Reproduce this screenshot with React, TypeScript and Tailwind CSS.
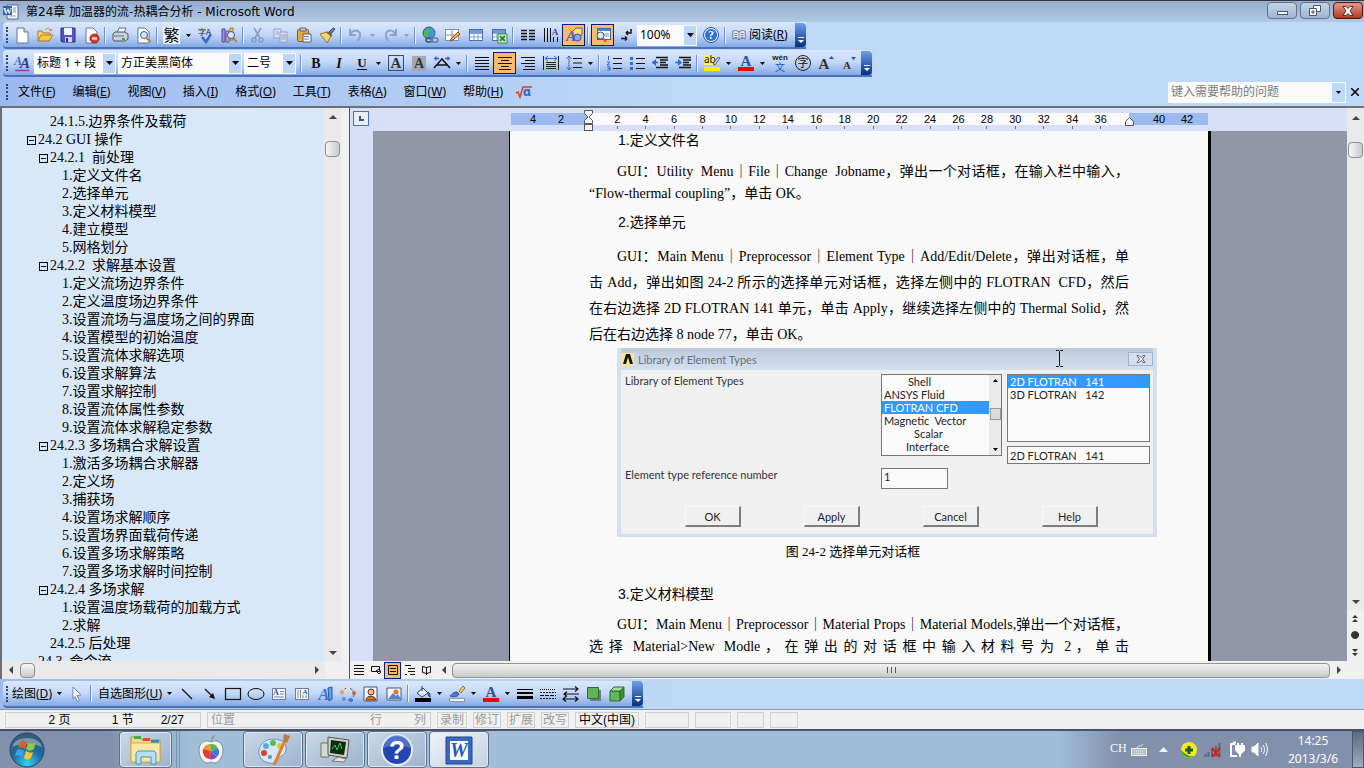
import { ReactNode } from "react";

const UI = "font-['Noto_Sans','Noto_Sans_CJK_SC',sans-serif]";
const SERIF = "font-['Liberation_Serif','Noto_Sans_CJK_SC',serif]";

const Svg = ({ children, size = 18 }: { children: ReactNode; size?: number }) => (
  <svg width={size} height={size} viewBox="0 0 18 18" fill="none" aria-hidden="true" className="shrink-0 overflow-visible">
    {children}
  </svg>
);

const Letter = ({ t, x = 9, y = 14, s = 14, fill = "#111", w = "bold", st = "normal" }: {
  t: string; x?: number; y?: number; s?: number; fill?: string; w?: string; st?: string;
}) => (
  <text x={x} y={y} fontSize={s} fill={fill} fontWeight={w} fontStyle={st} textAnchor="middle" fontFamily="Liberation Serif, serif">
    {t}
  </text>
);

const page = (
  <path d="M4 2h7l4 4v11H4z" fill="#fff" stroke="#6a7592" />
);

const grid = (
  <>
    <rect x="2.5" y="3.5" width="13" height="11" fill="#fff" stroke="#4a6fb5" />
    <path d="M3 4h12v3H3z" fill="#6f97dc" />
    <path d="M3 7.500h12M3 11h12M7 4v10M11 4v10" stroke="#7f9fd2" />
  </>
);

const icons: Record<string, ReactNode> = {
  new: <>{page}<path d="M11 2v4h4" fill="#cdd8ee" stroke="#6a7592" /></>,
  open: (
    <>
      <path d="M2 15V5h4l1 2h7v3" fill="#f8d775" stroke="#a97a1c" />
      <path d="M2 15l3-6h12l-4 6z" fill="#fbc84f" stroke="#a97a1c" />
      <path d="M9 4c2-3 5-2 6 1m0 0l-2-1m2 1l1-2" stroke="#d8862a" />
    </>
  ),
  save: (
    <>
      <path d="M2 2h14v14H3l-1-1z" fill="#5353c4" stroke="#2c2c86" />
      <path d="M5 2h8v7H5z" fill="#f4f4ff" />
      <path d="M6 11h7v5H6z" fill="#cfd1ef" />
      <path d="M7 12h2v4H7z" fill="#2c2c86" />
    </>
  ),
  perm: (
    <>
      {page}
      <circle cx="12.500" cy="12.500" r="4.500" fill="#dd3a28" stroke="#9d1c10" />
      <path d="M10 12.500h5" stroke="#fff" strokeWidth="2" />
    </>
  ),
  print: (
    <>
      <path d="M6 7l2-5h7l-2 5" fill="#fff" stroke="#5a6a88" />
      <path d="M2 8l2-2h10l3 2v5l-3 2H3l-1-1z" fill="#c9cfdb" stroke="#4c5566" />
      <path d="M3 10h10" stroke="#6a7386" />
      <path d="M11 12h3v2h-3z" fill="#2db52d" />
    </>
  ),
  preview: (
    <>
      {page}
      <circle cx="10" cy="9" r="3.500" fill="#cfe8fa" stroke="#42597e" />
      <path d="M12.500 12l4 4" stroke="#b8813a" strokeWidth="2" />
    </>
  ),
  spell: (
    <>
      <text x="1" y="9" fontSize="8" fill="#222" fontFamily="Noto Sans CJK SC, sans-serif">字A</text>
      <path d="M5 11l4 5 5-8" stroke="#3b68cc" strokeWidth="2.500" />
    </>
  ),
  research: (
    <>
      <path d="M2 3h3v13H2z" fill="#a38ddb" stroke="#5b4a9c" />
      <path d="M6 5h3v11H6z" fill="#c3b4ea" stroke="#5b4a9c" />
      <path d="M10 2h3v12h-3z" fill="#f1cf76" stroke="#9d7725" />
      <circle cx="11" cy="9" r="3.500" fill="#d7ecfb" stroke="#42597e" />
      <path d="M13.500 12l3 4" stroke="#c47b2a" strokeWidth="2" />
    </>
  ),
  cut: (
    <>
      <path d="M5 2l6 10M12 2L6 12" stroke="#8b99b8" strokeWidth="1.500" />
      <circle cx="5" cy="14" r="2" stroke="#8b99b8" strokeWidth="1.500" />
      <circle cx="12" cy="14" r="2" stroke="#8b99b8" strokeWidth="1.500" />
    </>
  ),
  copy: (
    <>
      <path d="M2 3h7v9H2z" fill="#d6e0f3" stroke="#93a1c2" />
      <path d="M8 6h7v10H8z" fill="#d6e0f3" stroke="#93a1c2" />
      <path d="M9 9h5M9 11h5M9 13h5M4 6h3M4 8h3" stroke="#93a1c2" />
    </>
  ),
  paste: (
    <>
      <rect x="2.500" y="3.500" width="11" height="12" rx="1" fill="#e6a73d" stroke="#8a5a12" />
      <path d="M5 2h6v3H5z" fill="#c8cede" stroke="#5a6274" />
      <path d="M8 8h8v8H8z" fill="#fff" stroke="#4c5a80" />
      <path d="M9 10.500h5M9 13h5" stroke="#5b7bc0" />
    </>
  ),
  brush: (
    <>
      <path d="M11 6l4-4 2 1-4 5z" fill="#6c7fa8" stroke="#404d6b" />
      <path d="M2 8l7-2 4 4-4 7C7 13 4 11 2 8z" fill="#f2d66a" stroke="#9a7c1e" />
      <path d="M9 6l5 4" stroke="#7b6448" strokeWidth="2" />
    </>
  ),
  undo: <path d="M3 3v6h6M3.500 8c3-6 12-4 9 4l-2 3" stroke="#8ba1cc" strokeWidth="2" />,
  redo: <path d="M15 3v6H9m5.500-1c-3-6-12-4-9 4l2 3" stroke="#8ba1cc" strokeWidth="2" />,
  link: (
    <>
      <circle cx="8" cy="7" r="6" fill="#4793dc" stroke="#255a96" />
      <path d="M4 4c3-3 6 0 4 2s1 4-2 5-4-4-2-7zm8 0l2 4-2 1z" fill="#52b84a" />
      <rect x="5" y="12" width="6" height="4" rx="2" stroke="#40526d" strokeWidth="1.500" />
      <rect x="10" y="12" width="7" height="4" rx="2" stroke="#6c7e99" strokeWidth="1.500" />
    </>
  ),
  borders: (
    <>
      <rect x="1.500" y="3.500" width="13" height="11" fill="#fff" stroke="#888fa3" />
      <path d="M2 9h12M8 4v10" stroke="#888fa3" />
      <path d="M7 13l7-7 2 2-7 6-3 1z" fill="#efb250" stroke="#8c4d24" />
    </>
  ),
  table: grid,
  excel: (
    <>
      {grid}
      <path d="M8 8h9v9H8z" fill="#e9f7e6" stroke="#2c8a35" />
      <path d="M10 10l5 5m0-5l-5 5" stroke="#2c8a35" strokeWidth="2" />
    </>
  ),
  columns: <path d="M2 4.500h6M2 7.500h6M2 10.500h6M2 13.500h6M10 4.500h6M10 7.500h6M10 10.500h6M10 13.500h6" stroke="#111" strokeWidth="1.300" />,
  vertical: (
    <>
      <path d="M2.500 2v14M5.500 2v14M8.500 2v14M11.500 11v5M15.500 11v5" stroke="#111" />
      <Letter t="A" x={13} y={9} s={9} fill="#24449a" />
    </>
  ),
  drawing: (
    <>
      <path d="M8 5l3-3h6v7l-3 3" fill="#f7dc8d" stroke="#7a6330" />
      <Letter t="A" x={6} y={15} s={15} fill="#5b62b8" st="italic" />
      <circle cx="12.500" cy="11.500" r="3.500" fill="#8ea9e4" stroke="#3c559c" />
    </>
  ),
  map: (
    <>
      <rect x="3.500" y="2.500" width="13" height="11" fill="#fff" stroke="#3f62a8" />
      <path d="M4 3h12v2H4z" fill="#5983d4" />
      <path d="M10 8h5M10 10h5" stroke="#7a93c6" />
      <circle cx="6.500" cy="9.500" r="3.500" fill="#d2ecfa" stroke="#3a5781" />
      <path d="M9 12l3 4" stroke="#a4682b" strokeWidth="2" />
    </>
  ),
  marks: <path d="M14 3v4H9m0 0l2-2M9 7l2 2M4 12.500h6m0 0l-2-2m2 2l-2 2" stroke="#111" strokeWidth="1.500" />,
  help: (
    <>
      <circle cx="9" cy="9" r="7.500" fill="#e8f1ff" stroke="#2657a8" />
      <circle cx="9" cy="9" r="6" fill="#2c6fe0" />
      <Letter t="?" y={13} s={12} fill="#fff" />
    </>
  ),
  read: (
    <>
      <path d="M1 4c3-1 5-1 8 1 3-2 5-2 8-1v10c-3-1-5-1-8 1-3-2-5-2-8-1z" fill="#eef3fb" stroke="#4a5878" />
      <path d="M9 5v10M3 7h4M3 9.500h4M3 12h4M11 7h4M11 9.500h4M11 12h4" stroke="#4a5878" />
    </>
  ),
  styles: (
    <>
      <Letter t="A" x={5} y={11} s={12} fill="#3668c8" st="italic" />
      <Letter t="A" x={12} y={14} s={15} fill="#35359c" st="italic" />
      <path d="M2 16.500h14" stroke="#8c3fae" strokeWidth="1.500" />
    </>
  ),
  bold: <Letter t="B" s={14} />,
  italic: <Letter t="I" s={14} st="italic" />,
  underline: <><Letter t="U" y={13} s={13} /><path d="M4 15.500h10" stroke="#111" /></>,
  boxA: <><rect x="1.500" y="1.500" width="15" height="15" stroke="#3c4c6c" /><Letter t="A" s={15} fill="#333" /></>,
  shadeA: <><path d="M2 2h14v15H2z" fill="#a3a8b1" /><Letter t="A" s={14} fill="#333" /></>,
  scaleA: (
    <>
      <path d="M1 4.500h5M3 2.500v4M17 4.500h-5m3-2v4" stroke="#2b5fd0" strokeWidth="1.300" />
      <path d="M1 14l8-9 8 9M4 11h10" stroke="#111" strokeWidth="1.500" />
    </>
  ),
  justify: <path d="M2 3.500h14M2 6.500h14M2 9.500h14M2 12.500h14M2 15.500h14" stroke="#111" />,
  center: <path d="M2 3.500h14M5 6.500h8M2 9.500h14M5 12.500h8M3 15.500h12" stroke="#111" />,
  right: <path d="M2 3.500h14M6 6.500h10M2 9.500h14M6 12.500h10M4 15.500h12" stroke="#111" />,
  distribute: (
    <>
      <path d="M1.500 2v14M16.500 2v14M4 8.500h10M4 10.500h10M4 12.500h10M4 14.500h10" stroke="#222" />
      <path d="M3 4.500h12M6 2L3 4.500 6 7m6-5l3 2.500L12 7" stroke="#3768ce" />
    </>
  ),
  spacing: <><path d="M8 4.500h9M8 9h9M8 13.500h9" stroke="#111" /><path d="M4 2v14M1.500 5L4 2l2.500 3M1.500 13L4 16l2.500-3" stroke="#3768ce" /></>,
  numbers: <><path d="M8 4.500h9M8 9.500h9M8 14.500h9" stroke="#111" /><path d="M3.500 2v4M2 8h3l-3 3h3M2 13h3v3H2m1-1.500h2" stroke="#3768ce" /></>,
  bullets: <><path d="M8 4.500h9M8 9.500h9M8 14.500h9" stroke="#111" /><path d="M2 3h3v3H2zM2 8h3v3H2zM2 13h3v3H2z" fill="#3768ce" /></>,
  outdent: <><path d="M5 3.500h12M9 6h8M9 8.500h6M9 11h8M5 13.500h12" stroke="#111" strokeWidth="1.300" /><path d="M1 8.500h6" stroke="#3768ce" strokeWidth="1.500" /><path d="M1 8.500L5 5v7z" fill="#3768ce" /></>,
  indent: <><path d="M5 3.500h12M9 6h8M9 8.500h6M9 11h8M5 13.500h12" stroke="#111" strokeWidth="1.300" /><path d="M1 8.500h6" stroke="#3768ce" strokeWidth="1.500" /><path d="M8 8.500L4 5v7z" fill="#3768ce" /></>,
  highlight: (
    <>
      <path d="M1 1h10v10H1z" fill="#f8f46a" />
      <text x="1" y="9" fontSize="10" fill="#111" fontFamily="Noto Sans, sans-serif">ab</text>
      <path d="M10 10l5-7 2 1-5 7z" fill="#cfd6e6" stroke="#555f77" />
      <path d="M1 13h16v4H1z" fill="#ffef00" />
    </>
  ),
  fontColor: <><Letter t="A" y={12} s={15} fill="#2c519c" /><path d="M1 13h16v4H1z" fill="#f00000" /></>,
  pinyin: (
    <>
      <text x="9" y="6" fontSize="8" fontWeight="bold" fill="#222" textAnchor="middle" fontFamily="Liberation Sans, sans-serif">wén</text>
      <text x="9" y="17" fontSize="10" fill="#2a50c2" textAnchor="middle" fontFamily="Noto Sans CJK SC, sans-serif">文</text>
    </>
  ),
  circled: (
    <>
      <circle cx="9" cy="9" r="7.500" stroke="#222" />
      <text x="9" y="13" fontSize="11" fill="#111" textAnchor="middle" fontFamily="Noto Sans CJK SC, sans-serif">字</text>
    </>
  ),
  grow: <><Letter t="A" x={7} y={15} s={15} fill="#333" /><path d="M12 5l2.500-3L17 5z" fill="#2b4fae" /></>,
  shrink: <><Letter t="A" x={7} y={15} s={11} fill="#333" /><path d="M11 3h5l-2.500 3z" fill="#2b4fae" /></>,
  pointer: <path d="M5 2l8 8-4 .5 2.500 5-2 1-2.500-5L5 14z" fill="#fff" stroke="#7487ad" />,
  line: <path d="M4 4l10 10" stroke="#111" strokeWidth="1.200" />,
  arrow: <><path d="M4 4l9 9" stroke="#111" strokeWidth="1.200" /><path d="M14 14l-6-2 4-4z" fill="#111" /></>,
  rect: <rect x="1.500" y="3.500" width="15" height="11" stroke="#111" strokeWidth="1.200" />,
  ellipse: <ellipse cx="9" cy="9" rx="8" ry="5.500" stroke="#111" />,
  textbox: (
    <>
      <rect x="2.500" y="3.500" width="13" height="11" fill="#f5f8fe" stroke="#6f7a93" />
      <Letter t="A" x={6} y={10} s={8} fill="#2a4ea5" />
      <path d="M10 6.500h4M10 9h4M4 12h10" stroke="#6f87bb" />
    </>
  ),
  vtextbox: (
    <>
      <rect x="2.500" y="3.500" width="13" height="11" fill="#f5f8fe" stroke="#6f7a93" />
      <path d="M5 5v8M7.500 5v8M10 10v3M13 10v3" stroke="#7b8191" />
      <Letter t="A" x={12} y={9} s={7} fill="#2a4ea5" />
    </>
  ),
  wordart: <><path d="M12 3l4-1v12l-3 2z" fill="#6ba0ee" stroke="#2a4ea5" /><Letter t="A" x={8} y={15} s={17} fill="#3a75d8" st="italic" /></>,
  diagram: (
    <>
      <circle cx="9" cy="9" r="6" stroke="#3a4a70" strokeDasharray="3 3" />
      <circle cx="9" cy="3" r="2" fill="#f3e2a5" />
      <circle cx="15" cy="8" r="2" fill="#d95c3a" />
      <circle cx="12" cy="15" r="2" fill="#4d6fd0" />
      <circle cx="5" cy="14" r="2" fill="#6a8fe0" />
      <circle cx="3" cy="7" r="2" fill="#f0a030" />
    </>
  ),
  clip: (
    <>
      <path d="M2 2h13v14H2z" fill="#f4f6fb" stroke="#4b5670" />
      <circle cx="9" cy="7" r="3" fill="#edb78d" stroke="#5a3415" />
      <path d="M4 15c0-5 9-5 10 0z" fill="#dc7526" stroke="#5a3415" />
    </>
  ),
  picture: (
    <>
      <path d="M2 3h14v12H2z" fill="#f4f6fb" stroke="#4b5670" />
      <circle cx="11" cy="7" r="2.500" fill="#e9752c" />
      <path d="M3 14l5-6 3 3 2-2 3 5z" fill="#5a82c9" />
    </>
  ),
  fill: (
    <>
      <path d="M3 8l6-5 5 5-6 4z" fill="#e7edf8" stroke="#33456b" />
      <path d="M8 6V1M14 7c2 1 2 3 2 5-2-1-2-3-2-5z" fill="#4878d6" stroke="#33456b" />
      <path d="M1 13h16v4H1z" fill="#000" />
    </>
  ),
  lineColor: (
    <>
      <path d="M2 11c2 0 2-4 7-4l2 2c-1 3-5 3-9 2z" fill="#4a7bd6" stroke="#274c93" />
      <path d="M11 6l4-5 2 2-4 5z" fill="#f2cd62" stroke="#96752a" />
      <rect x="1.500" y="13.500" width="15" height="3" fill="#f1f4f8" stroke="#8a94a8" />
    </>
  ),
  lineStyle: <><path d="M1 4.500h16" stroke="#000" /><path d="M1 8h16" stroke="#000" strokeWidth="2" /><path d="M1 12.500h16" stroke="#000" strokeWidth="3" /></>,
  dashStyle: <><path d="M1 4.500h16" stroke="#111" strokeDasharray="1 1" /><path d="M1 7.500h16M1 13.500h16" stroke="#111" strokeDasharray="2 1" /><path d="M1 10.500h16" stroke="#111" strokeDasharray="4 1" /></>,
  arrowStyle: <path d="M1 4h15M13 1.500L16 4l-3 2.500M17 9H2m3-2.500L2 9l3 2.500M1 14h15M4 11.500L1 14l3 2.500M13 11.500l3 2.500-3 2.500" stroke="#111" strokeWidth="1.200" />,
  shadow: <><path d="M5 5h11v11H5z" fill="#6f7c8e" /><path d="M2.500 2.500h11v11h-11z" fill="#63b15a" stroke="#2d6e2b" /></>,
  cube: (
    <>
      <path d="M2 6h10v10H2z" fill="#67b45e" stroke="#2d6e2b" />
      <path d="M2 6l4-4h10l-4 4z" fill="#a9dba0" stroke="#2d6e2b" />
      <path d="M12 6l4-4v10l-4 4z" fill="#3f8b3b" stroke="#2d6e2b" />
    </>
  ),
};

const Tool = ({ name, on = false }: { name: string; on?: boolean }) => (
  <button
    aria-label={name}
    className={`flex h-[22px] w-[23px] shrink-0 items-center justify-center ${on ? "border border-[#0a1a80] bg-[#fdba69]" : ""}`}
  >
    <Svg>{icons[name]}</Svg>
  </button>
);

const Caret = ({ muted = false }: { muted?: boolean }) => (
  <button aria-label="more" className="flex h-5 w-[11px] shrink-0 items-center justify-center">
    <svg width="5" height="3" viewBox="0 0 5 3"><path d="M0 0h5L2.500 3z" fill={muted ? "#8a9ac0" : "#000"} /></svg>
  </button>
);

const Sep = () => (
  <div className="flex w-[6px] shrink-0 justify-center"><div className="h-[17px] w-0.5 border-l border-[#6d8fcb] bg-[#eef5ff]" /></div>
);

const Grip = () => <div className="ml-[3px] h-4 w-[3px] shrink-0 border-l-2 border-dotted border-[#2c4783]" />;

const EndCap = () => (
  <div className="ml-auto flex h-full w-[11px] shrink-0 flex-col items-center justify-end gap-0.5 rounded-r bg-gradient-to-b from-[#6f9fea] to-[#06307f] pb-1">
    <div className="h-px w-[6px] bg-white" />
    <svg width="6" height="3" viewBox="0 0 6 3"><path d="M0 0h6L3 3z" fill="#fff" /></svg>
  </div>
);

const Bar = ({ children, className }: { children: ReactNode; className: string }) => (
  <div className={`ml-[3px] mb-px flex h-[27px] shrink-0 items-center rounded-l border-b-2 border-[#4a72bb] bg-gradient-to-b from-[#dbe8fb] via-[#c2d7f7] to-[#84a9e4] ${className}`}>
    <Grip />
    {children}
  </div>
);

const Combo = ({ label, value, className }: { label: string; value: string; className: string }) => (
  <div className={`mr-0.5 flex h-[21px] shrink-0 border border-[#f8fbff] bg-[#fafafa] ${className}`}>
    <select aria-label={label} className="min-w-0 flex-1 appearance-none overflow-hidden bg-transparent pl-0.5 text-xs leading-4 text-black">
      <option>{value}</option>
    </select>
    <div className="pointer-events-none flex w-3 shrink-0 items-center justify-center bg-[#bcd5f8]">
      <svg width="7" height="4" viewBox="0 0 7 4"><path d="M0 0h7L3.500 4z" /></svg>
    </div>
  </div>
);

const menus = [
  ["文件", "F"], ["编辑", "E"], ["视图", "V"], ["插入", "I"], ["格式", "O"],
  ["工具", "T"], ["表格", "A"], ["窗口", "W"], ["帮助", "H"],
];

const outline = [
  { t: "24.1.5.边界条件及载荷", l: 2 },
  { t: "24.2 GUI 操作", l: 0, box: true },
  { t: "24.2.1  前处理", l: 1, box: true },
  { t: "1.定义文件名", l: 3 },
  { t: "2.选择单元", l: 3 },
  { t: "3.定义材料模型", l: 3 },
  { t: "4.建立模型", l: 3 },
  { t: "5.网格划分", l: 3 },
  { t: "24.2.2  求解基本设置", l: 1, box: true },
  { t: "1.定义流场边界条件", l: 3 },
  { t: "2.定义温度场边界条件", l: 3 },
  { t: "3.设置流场与温度场之间的界面", l: 3 },
  { t: "4.设置模型的初始温度", l: 3 },
  { t: "5.设置流体求解选项", l: 3 },
  { t: "6.设置求解算法", l: 3 },
  { t: "7.设置求解控制", l: 3 },
  { t: "8.设置流体属性参数", l: 3 },
  { t: "9.设置流体求解稳定参数", l: 3 },
  { t: "24.2.3 多场耦合求解设置", l: 1, box: true },
  { t: "1.激活多场耦合求解器", l: 3 },
  { t: "2.定义场", l: 3 },
  { t: "3.捕获场", l: 3 },
  { t: "4.设置场求解顺序", l: 3 },
  { t: "5.设置场界面载荷传递", l: 3 },
  { t: "6.设置多场求解策略", l: 3 },
  { t: "7.设置多场求解时间控制", l: 3 },
  { t: "24.2.4 多场求解", l: 1, box: true },
  { t: "1.设置温度场载荷的加载方式", l: 3 },
  { t: "2.求解", l: 3 },
  { t: "24.2.5 后处理", l: 2 },
  { t: "24.3  命令流", l: 1 },
];

const levels = ["pl-6", "pl-9", "pl-12", "pl-[60px]"];

const arrows = {
  up: "M0 4h8L4 0z",
  down: "M0 0h8L4 4z",
  left: "M4 0v8L0 4z",
  right: "M0 0v8l4-4z",
};

const ScrollArrow = ({ dir }: { dir: keyof typeof arrows }) => {
  const vertical = dir === "up" || dir === "down";
  return (
    <button aria-label={`scroll ${dir}`} className="flex h-[17px] w-[17px] shrink-0 items-center justify-center">
      <svg width={vertical ? 8 : 4} height={vertical ? 4 : 8}><path d={arrows[dir]} fill="#444" /></svg>
    </button>
  );
};

const VScroll = ({ className = "" }: { className?: string }) => (
  <div className={`flex w-[17px] shrink-0 flex-col bg-[#e9e9ea] ${className}`}>
    <ScrollArrow dir="up" />
    <div className="mt-4 h-4 w-[15px] self-center rounded-sm border border-[#8d8f93] bg-gradient-to-r from-[#f6f6f6] to-[#c9cacc]" />
    <div className="flex-1" />
    <ScrollArrow dir="down" />
  </div>
);

const NavPane = () => (
  <div className="flex w-[347px] shrink-0 flex-col bg-[#f0f0f1]">
    <div className="flex min-h-0 flex-1">
      <ul className={`min-w-0 flex-1 overflow-hidden bg-[#d9e8f8] pt-[5px] text-sm text-black ${SERIF}`}>
        {outline.map((o) => (
          <li key={o.t} className={`flex h-[18px] items-center whitespace-pre leading-[18px] ${levels[o.l]}`}>
            {o.box && (
              <button aria-label="collapse" className="mx-px flex h-[9px] w-[9px] items-center justify-center border border-black">
                <span className="h-px w-[5px] bg-black" />
              </button>
            )}
            <span className={o.box ? "ml-px" : ""}>{o.t}</span>
          </li>
        ))}
      </ul>
      <VScroll className="mr-2" />
    </div>
    <div className="mr-6 flex h-[18px] shrink-0 items-center bg-[#e9e9ea]">
      <ScrollArrow dir="left" />
      <div className="ml-px h-[15px] w-[15px] rounded-sm border border-[#8d8f93] bg-gradient-to-b from-[#f6f6f6] to-[#c9cacc]" />
      <div className="flex-1" />
      <ScrollArrow dir="right" />
    </div>
  </div>
);

const Ruler = () => (
  <div className="relative flex h-[23px] w-[702px] shrink-0 pt-[5px] font-['Liberation_Sans',sans-serif] text-[11px] leading-3 text-black">
    <div className="ml-0.5 flex h-3 w-[78px] justify-end bg-[#9bbaf0] pr-3.5 text-center">
      <span className="w-7">4</span>
      <span className="w-7">2</span>
    </div>
    <div className="flex h-3 flex-1 bg-[#fafafa] px-3.5 text-center">
      {Array.from({ length: 18 }, (_, i) => (
        <span key={i} className="flex flex-1 flex-col items-center">
          {i * 2 + 2}
          <i className="mt-px h-[3px] w-px shrink-0 bg-[#777]" />
        </span>
      ))}
    </div>
    <div className="mr-[3px] flex h-3 w-[79px] bg-[#9bbaf0] pl-4 text-center">
      <span className="w-7">40</span>
      <span className="w-7">42</span>
    </div>
    <svg className="absolute left-[74px] top-[2px]" width="11" height="21" viewBox="0 0 11 21" fill="#f4f4f4" stroke="#555">
      <path d="M1.500 .5h8v3L6 7l3.500 3.500v3h-8v-3L5 7 1.500 3.500z" />
      <rect x="1.500" y="14.500" width="8" height="6" />
    </svg>
    <svg className="absolute right-[76px] top-[9px]" width="11" height="10" viewBox="0 0 11 10" fill="#f4f4f4" stroke="#555">
      <path d="M1.500 8.500v-4l4-4 4 4v4z" />
    </svg>
  </div>
);

const DialogButton = ({ children }: { children: ReactNode }) => (
  <button className="h-[21px] w-14 border-b-2 border-r-2 border-[#7d7d7d] border-l border-t border-l-[#f8f8f8] border-t-[#f8f8f8] bg-[#f0f0f0]">
    {children}
  </button>
);

const ElementDialog = () => (
  <div className="ml-7 flex h-[189px] w-[540px] flex-col border-x-4 border-b-[3px] border-[#d3e0f0] bg-[#f0f0f0] font-['Lato',sans-serif] text-[11px] leading-[13px] text-[#333]">
    <div className="relative flex h-[22px] shrink-0 items-center bg-gradient-to-b from-[#bfc9dc] to-[#d3e0ee]">
      <div className="flex h-[13px] w-[13px] items-center justify-center bg-[#f6e68e]">
        <svg width="12" height="12" viewBox="0 0 12 12"><path d="M1 11L4 1h4l3 10H8L6 4l-2 7z" fill="#111" /></svg>
      </div>
      <span className="ml-1 text-[#66707d]">Library of Element Types</span>
      <button aria-label="close" className="ml-auto flex h-[14px] w-[25px] items-center justify-center border border-[#a3b2c8] bg-[#d5deea]">
        <svg width="10" height="8" viewBox="0 0 10 8" stroke="#5c6470" fill="#f4f6fa"><path d="M1 .5h2L5 2.500 7 .5h2L6.500 4 9 7.500H7l-2-2-2 2H1L3.500 4z" /></svg>
      </button>
      <svg className="absolute right-[89px] top-0.5" width="9" height="17" viewBox="0 0 9 17" stroke="#111"><path d="M1 .5h2.500l1 1 1-1H8M1 16.500h2.500l1-1 1 1H8M4.500 1.500v14" fill="none" /></svg>
    </div>
    <div className="grid grid-cols-[256px_121px_1fr] gap-x-[5px] px-[3px] pt-1">
      <p className="pl-px">Library of Element Types</p>
      <div className="-ml-[4px] flex h-[82px] w-[121px] border border-[#777] bg-[#fafafa]">
        <ul role="listbox" aria-label="Element family" className="flex-1 whitespace-pre text-[#222]">
          <li role="option" className="pl-[26px]">Shell</li>
          <li role="option" className="pl-0.5">ANSYS Fluid</li>
          <li role="option" aria-selected="true" className="bg-[#3399ff] pl-0.5 text-white">FLOTRAN CFD</li>
          <li role="option" className="pl-0.5">Magnetic  Vector</li>
          <li role="option" className="pl-8">Scalar</li>
          <li role="option" className="pl-6">Interface</li>
        </ul>
        <div className="flex w-3 flex-col items-center justify-between bg-[#e9e9e9] py-1">
          <svg width="5" height="3"><path d="M0 3h5L2.500 0z" /></svg>
          <div className="mt-4 h-3 w-[11px] border border-[#999] bg-[#dcdcdc]" />
          <span className="h-2" />
          <svg width="5" height="3"><path d="M0 0h5L2.500 3z" /></svg>
        </div>
      </div>
      <div className="-ml-1 flex flex-col gap-1 text-[#222]">
        <ul role="listbox" aria-label="Element type" className="h-[68px] whitespace-pre border border-[#777] bg-[#fafafa]">
          <li role="option" aria-selected="true" className="bg-[#3399ff] pl-0.5 text-white">2D FLOTRAN   141</li>
          <li role="option" className="pl-0.5">3D FLOTRAN   142</li>
        </ul>
        <input aria-label="Selected type" defaultValue="2D FLOTRAN   141" className="h-[18px] w-full border border-[#777] bg-[#fafafa] pl-0.5" />
      </div>
    </div>
    <div className="flex items-start px-1 pt-1">
      <label htmlFor="refnum" className="w-[256px]">Element type reference number</label>
      <input id="refnum" defaultValue="1" className="h-[21px] w-[67px] border border-[#777] bg-[#fafafa] pb-1 pl-0.5 text-[#222]" />
    </div>
    <div className="mt-[17px] flex gap-[63px] pl-16 text-[#222]">
      {["OK", "Apply", "Cancel", "Help"].map((b) => <DialogButton key={b}>{b}</DialogButton>)}
    </div>
  </div>
);

const Line = ({ children, tall = false, indent = false, last = false }: {
  children: ReactNode; tall?: boolean; indent?: boolean; last?: boolean;
}) => (
  <p className={`whitespace-nowrap text-sm ${tall ? "h-[26px] leading-[26px]" : "h-[22px] leading-[22px]"} ${indent ? "pl-7" : ""} ${last ? "" : "[text-align-last:justify]"}`}>
    {children}
  </p>
);

const Heading = ({ children, className = "" }: { children: ReactNode; className?: string }) => (
  <h2 className={`h-[18px] pl-[29px] font-['Liberation_Sans','Noto_Sans_CJK_SC',sans-serif] text-sm leading-[18px] ${className}`}>{children}</h2>
);

const Page = () => (
  <article className={`min-h-0 w-[702px] flex-1 border-l border-r-[3px] border-black bg-[#f9f9f9] px-[79px] text-black ${SERIF}`}>
    <Heading>1.定义文件名</Heading>
    <div className="mt-3">
      <Line indent>GUI：Utility&nbsp; Menu｜File｜Change&nbsp; Jobname，弹出一个对话框，在输入栏中输入，</Line>
      <Line last>“Flow-thermal coupling”，单击 OK。</Line>
    </div>
    <Heading className="mt-2">2.选择单元</Heading>
    <div className="mt-3 pt-px">
      <Line tall indent>GUI：Main Menu｜Preprocessor｜Element Type｜Add/Edit/Delete，弹出对话框，单</Line>
      <Line tall>击 Add，弹出如图 24-2 所示的选择单元对话框，选择左侧中的 FLOTRAN&nbsp; CFD，然后</Line>
      <Line tall>在右边选择 2D FLOTRAN 141 单元，单击 Apply，继续选择左侧中的 Thermal Solid，然</Line>
      <Line tall last>后在右边选择 8 node 77，单击 OK。</Line>
    </div>
    <ElementDialog />
    <p className="mt-1.5 h-[18px] pr-3 text-center text-[13px] leading-[18px]">图 24-2 选择单元对话框</p>
    <Heading className="mt-6">3.定义材料模型</Heading>
    <div className="mt-[11px]">
      <Line indent>GUI：Main Menu｜Preprocessor｜Material Props｜Material Models,弹出一个对话框，</Line>
      <Line>选 择 &nbsp;Material&gt;New&nbsp; Modle ， 在 弹 出 的 对 话 框 中 输 入 材 料 号 为 &nbsp;2 ， 单 击</Line>
    </div>
  </article>
);

const views = [
  "M1 1.500h10M1 4.500h10M1 7.500h10M1 10.500h10",
  "M1.500 2.500h8v5h-8zM6 7l3-2 2 3-2 2z",
  "M1.500 1.500h9v9h-9zM3 4.500h6M3 7.500h6",
  "M1 1.500h6M4 4.500h7M4 7.500h7M1 10.500h2M6 10.500h5",
  "M1.500 2.500l4 1 4-1v6l-4 1-4-1zM5.500 3v8",
];

const Editor = () => (
  <div className="flex min-w-0 flex-1 flex-col bg-[#f0f0f1]">
    <div className="flex min-h-0 flex-1">
      <div className="w-[23px] shrink-0 bg-[#d8dff8] pl-[3px] pt-[3px]">
        <button aria-label="tab stop" className="flex h-[15px] w-4 items-center justify-center border border-[#4a6fc0] bg-[#e9eefb]">
          <span className="h-[5px] w-[5px] border-b-2 border-l-2 border-[#555]" />
        </button>
      </div>
      <div className="flex min-w-0 flex-1 flex-col overflow-hidden bg-[#9197a6]">
        <div className="flex shrink-0 justify-center bg-[#d8dff8]"><Ruler /></div>
        <div className="flex min-h-0 flex-1 flex-col items-center overflow-hidden"><Page /></div>
      </div>
      <div className="flex w-[17px] shrink-0 flex-col">
        <VScroll className="flex-1 pt-px" />
        {["M1 4l3-3 3 3zM1 8l3-3 3 3z", "M4 0a4 4 0 1 0 .1 0z", "M1 1h6L4 4zM1 5h6L4 8z"].map((d) => (
          <button key={d} aria-label="browse" className="flex h-[17px] items-center justify-center">
            <svg width="9" height="9"><path d={d} fill="#333" /></svg>
          </button>
        ))}
      </div>
    </div>
    <div className="flex h-[18px] shrink-0 items-center">
      {views.map((d, i) => (
        <button key={d} aria-label={`view ${i + 1}`} className={`flex h-[17px] w-[17px] items-center justify-center ${i === 2 ? "border border-[#0a1a80] bg-[#fdba69]" : ""}`}>
          <svg width="12" height="12" viewBox="0 0 12 12" fill="none" stroke="#111" className="shrink-0"><path d={d} /></svg>
        </button>
      ))}
      <ScrollArrow dir="left" />
      <div className="flex h-[15px] flex-1 items-center justify-center gap-px rounded-sm border border-[#909295] bg-gradient-to-b from-[#f0f0f0] via-[#dedfe0] to-[#c6c7c9]">
        <i className="mx-px h-1.5 w-px bg-[#555]" /><i className="mx-px h-1.5 w-px bg-[#555]" /><i className="mx-px h-1.5 w-px bg-[#555]" />
      </div>
      <ScrollArrow dir="right" />
      <div className="w-[17px]" />
    </div>
  </div>
);

const TaskButton = ({ children, label, className = "" }: { children: ReactNode; label: string; className?: string }) => (
  <button aria-label={label} className={`flex h-full items-center justify-center rounded-sm border border-[#5c6f8c] bg-gradient-to-br from-[#cbd8e6] to-[#9cb3cc] shadow-[inset_0_0_0_1px_#dde8f2] ${className}`}>
    <svg width="34" height="34" viewBox="0 0 34 34" fill="none">{children}</svg>
  </button>
);

const Taskbar = () => (
  <footer className="flex h-[39px] shrink-0 items-stretch border-t-2 border-[#46536b] bg-gradient-to-r from-[#8191ac] from-[8%] via-[#a0bed6] via-[14%] to-[#a0bed6]">
    <button aria-label="start" className="mr-[74px] flex w-[45px] items-center justify-end">
      <svg width="36" height="36" viewBox="0 0 36 36">
        <defs>
          <radialGradient id="orb" cx=".5" cy=".9" r=".9">
            <stop offset="0" stopColor="#35d0f2" />
            <stop offset=".5" stopColor="#1c6d9f" />
            <stop offset="1" stopColor="#3c5a74" />
          </radialGradient>
        </defs>
        <circle cx="18" cy="18" r="17" fill="url(#orb)" stroke="#27455f" />
        <path d="M3 15C6 3 30 3 33 15c-8-4-22-4-30 0z" fill="#b7cfdf" opacity=".5" />
        <path d="M11 10c2-2 4-2 7 0l-2 7c-3-2-5-2-7-1z" fill="#ea5b27" />
        <path d="M19 11c3 1 5 1 8-1l-2 7c-3 2-5 2-8 0z" fill="#93c540" />
        <path d="M8 18c3-1 5-1 7 1l-2 6c-2-2-4-2-7-1z" fill="#38a3e8" />
        <path d="M17 19c3 2 5 2 7 1l-2 6c-3 2-5 2-7 0z" fill="#fcc928" />
      </svg>
    </button>
    <TaskButton label="explorer" className="w-[53px]">
      <path d="M2 4h9l2 3h18v22H2z" fill="#f2da86" stroke="#b8923a" />
      <path d="M5 3h7v3H5z" fill="#3fae49" /><path d="M14 5h7v3h-7z" fill="#d94e34" /><path d="M22 7h8v3h-8z" fill="#3c7fd0" />
      <path d="M2 10h29v19H2z" fill="#f8e8a4" stroke="#cfae56" />
      <path d="M7 31V20l2-2h16l2 2v11h-5v-7H12v7z" fill="#b5dff2" stroke="#4b93bd" />
    </TaskButton>
    <div className="ml-1 w-1 border-x border-[#7e96b2]" />
    <button aria-label="app" className="flex w-[62px] items-center justify-center">
      <svg width="32" height="34" viewBox="0 0 32 34" fill="none">
        <path d="M16 8c0-3 1-6 4-6-1 3-2 4-4 6z" fill="#8796a8" />
        <path d="M16 9c5-3 12 0 12 8 0 6-4 13-8 13-2 0-3-1-4-1s-2 1-4 1c-4 0-8-7-8-13 0-8 7-11 12-8z" fill="#f4f5f7" stroke="#7e8998" />
        <path d="M16 18l-8-2a8 8 0 0 1 7-5z" fill="#f59a23" /><path d="M16 18l-1-7a8 8 0 0 1 8 4z" fill="#58b947" />
        <path d="M16 18l7-3a8 8 0 0 1-1 9z" fill="#2f7fe0" /><path d="M16 18l6 6a8 8 0 0 1-8 2z" fill="#8c46c2" />
        <path d="M16 18l-2 8a8 8 0 0 1-6-10z" fill="#e33b2c" />
      </svg>
    </button>
    <TaskButton label="paint" className="mx-px w-[60px]">
      <path d="M17 6c10 0 14 6 13 11-1 6-7 6-8 9-1 4-5 5-9 4C5 28 2 23 3 17 4 11 9 6 17 6z" fill="#d6e7f5" stroke="#6f93b8" />
      <circle cx="10" cy="13" r="3" fill="#5aa9e6" /><circle cx="17" cy="10" r="3" fill="#62b847" /><circle cx="24" cy="13" r="3" fill="#e8c23a" /><circle cx="8" cy="20" r="3" fill="#d94434" /><circle cx="14" cy="24" r="2" fill="#6a88aa" />
      <path d="M30 5L18 32" stroke="#dd8330" strokeWidth="3" /><path d="M28 1l6 2-3 7-4-2z" fill="#b87c46" />
    </TaskButton>
    <TaskButton label="monitor" className="mx-px w-[60px]">
      <path d="M3 10h8v14H3z" fill="#d9d9d4" stroke="#6e7068" />
      <path d="M10 4l21 3-2 18-19-3z" fill="#cfd0cb" stroke="#55584f" />
      <path d="M13 7l15 2-2 13-14-2z" fill="#0c2a14" />
      <path d="M14 16l3-4 2 5 3-7 2 6" stroke="#33d14c" />
      <path d="M14 28l12 1 2-3-8-2z" fill="#e4e4e0" stroke="#777" />
    </TaskButton>
    <TaskButton label="help" className="mx-px w-[60px]">
      <circle cx="17" cy="17" r="15" fill="#2346b0" stroke="#e9eef6" strokeWidth="2" />
      <path d="M4 15a13 13 0 0 1 26 0c-8-4-18-4-26 0z" fill="#6f90dd" opacity=".6" />
      <text x="17" y="26" fontSize="26" fontWeight="bold" fill="#fff" textAnchor="middle" fontFamily="Liberation Sans, sans-serif">?</text>
    </TaskButton>
    <TaskButton label="word" className="ml-px w-[60px] from-[#eef3f8] to-[#c3d2e1]">
      <path d="M4 4h26v27H4z" fill="#3a68bd" stroke="#1f4796" />
      <path d="M8 8h18v19H8z" fill="#f5f8fd" />
      <text x="17" y="24" fontSize="20" fontWeight="bold" fontStyle="italic" fill="#2b58b0" textAnchor="middle" fontFamily="Liberation Serif, serif">W</text>
    </TaskButton>
    <div className="flex flex-1 items-center justify-end bg-gradient-to-r from-transparent from-[65%] to-[#8190ab] to-[72%] text-white">
      <span className="mb-1 w-[21px] font-['Liberation_Serif',serif] text-xs">CH</span>
      <svg width="16" height="14" viewBox="0 0 16 14" fill="#b9c0cb" stroke="#eceff3"><path d="M6 5c0-3 5-1 6-4" fill="none" /><rect x=".5" y="5.500" width="15" height="7" /><path d="M3 8h10M3 10.500h10" strokeDasharray="1 1" /></svg>
      <svg className="ml-3" width="9" height="5"><path d="M0 5h9L4.500 0z" fill="#f4f6fa" /></svg>
      <svg className="ml-3" width="18" height="18" viewBox="0 0 18 18"><circle cx="9" cy="9" r="8" fill="#f4ea22" /><path d="M1 9a8 8 0 0 0 14 5C12 17 6 14 1 9z" fill="#42a52c" /><path d="M9 5v8M5 9h8" stroke="#1d5c1a" strokeWidth="3" /></svg>
      <svg className="ml-1.5" width="18" height="17" viewBox="0 0 18 17" fill="none"><path d="M1.500 13v3M4.500 11v5M8 8v8M12 5v11M15.500 2v14" stroke="#5b667b" strokeWidth="2" /><path d="M8 7l8 9m0-9l-8 9" stroke="#e01818" strokeWidth="2" /></svg>
      <svg className="ml-1.5" width="17" height="17" viewBox="0 0 17 17" fill="none" stroke="#fff" strokeWidth="2"><path d="M9 15H3V3h4M5 1.500h3" /><path d="M8 5h8v4l-3 3h-2L8 9z" fill="#fff" /><path d="M10 2v3m4-3v3m-2 7v4" /></svg>
      <svg className="ml-1.5" width="17" height="15" viewBox="0 0 17 15" fill="#fff" stroke="#fff"><path d="M1 5h2l4-4v13L3 10H1z" /><path d="M10 5c1 2 1 3 0 5M12 3c2 3 2 6 0 9M14.500 1c3 5 2 9 0 13" fill="none" /></svg>
      <div className={`ml-3 w-[66px] text-center text-xs leading-[18px] ${UI}`}>
        <div>14:25</div>
        <div>2013/3/6</div>
      </div>
      <button aria-label="show desktop" className="ml-[6px] h-full w-3 border border-[#4a586e] bg-gradient-to-b from-[#5d6c80] to-[#9badc0]" />
    </div>
  </footer>
);

const statusCells = [
  { t: "录制", w: "w-[30px]" }, { t: "修订", w: "w-7" }, { t: "扩展", w: "w-7" }, { t: "改写", w: "w-7" },
  { t: "中文(中国)", w: "w-16", on: true }, { t: "", w: "w-11" }, { t: "", w: "w-9" }, { t: "", w: "w-[27px]" }, { t: "", w: "w-7" },
];

const cell = "h-4 shrink-0 border border-[#cfcfcf] leading-[14px] whitespace-nowrap";

const App = () => (
  <div className={`flex h-screen min-h-[600px] flex-col overflow-hidden bg-[#bed8f7] text-xs text-black ${UI}`}>
    <header className="flex h-[22px] shrink-0 items-center border-t border-[#33363d] bg-gradient-to-b from-[#96abce] to-[#b0c9e2]">
      <svg className="ml-0.5" width="17" height="16" viewBox="0 0 17 16">
        <path d="M5 1h11v14H5z" fill="#fff" stroke="#4a67a6" />
        <path d="M11 4h3M11 6h3M11 8h3M7 12h7" stroke="#7a93c6" />
        <path d="M1 2h9v9H1z" fill="#2d58b3" />
        <text x="5.500" y="10" fontSize="9" fontWeight="bold" fill="#fff" textAnchor="middle" fontFamily="Liberation Serif, serif">W</text>
      </svg>
      <h1 className="ml-[7px] font-['DejaVu_Sans','Noto_Sans_CJK_SC',sans-serif] text-xs leading-[18px]">第24章 加温器的流-热耦合分析 - Microsoft Word</h1>
      <div className="ml-auto mr-px flex gap-[3px] self-start pt-px">
        <button aria-label="minimize" className="flex h-[17px] w-[30px] items-center justify-center rounded-sm border border-[#5f7390] bg-gradient-to-b from-[#c4d3e5] to-[#9fb5d0]">
          <span className="mt-1 h-1 w-[11px] border border-[#4a5566] bg-white" />
        </button>
        <button aria-label="restore" className="flex h-[17px] w-[30px] items-center justify-center rounded-sm border border-[#5f7390] bg-gradient-to-b from-[#c4d3e5] to-[#9fb5d0]">
          <svg width="12" height="11" viewBox="0 0 12 11" fill="#fff" stroke="#4a5566"><path d="M4.500.5h7v6h-7z" /><path d="M.5 3.500h7v7h-7zM3 6h2v2H3z" /></svg>
        </button>
        <button aria-label="close" className="flex h-[17px] w-[30px] items-center justify-center rounded-sm border border-[#4a1710] bg-gradient-to-b from-[#dd9a8a] to-[#b93320]">
          <svg width="12" height="10" viewBox="0 0 12 10" fill="#fff" stroke="#53302c"><path d="M1 .5h3l2 2 2-2h3L8 5l3 4.500H8l-2-2-2 2H1L4 5z" /></svg>
        </button>
      </div>
    </header>

    <div className="shrink-0 bg-gradient-to-r from-[#9dbaf0] to-[#bed8f7] to-[50%]">
      <Bar className="w-[803px] pt-px">
        <div className="ml-px flex items-center">
          <Tool name="new" /><Tool name="open" /><Tool name="save" /><Tool name="perm" /><Sep />
          <Tool name="print" /><Tool name="preview" /><Sep />
          <button className="flex h-[17px] w-[23px] items-center justify-center"><span className="bg-[#f4f6fa] text-base leading-[17px]">繁</span></button><Caret />
          <Tool name="spell" /><Tool name="research" /><Sep />
          <Tool name="cut" /><Tool name="copy" /><Tool name="paste" /><Tool name="brush" /><Sep />
          <Tool name="undo" /><Caret muted /><Tool name="redo" /><Caret muted /><Sep />
          <Tool name="link" /><Tool name="borders" /><Tool name="table" /><Tool name="excel" /><Sep />
          <Tool name="columns" /><Tool name="vertical" /><Tool name="drawing" on /><Sep />
          <Tool name="map" on /><Tool name="marks" />
          <Combo label="zoom" value="100%" className="w-[60px]" />
          <Tool name="help" /><Sep />
          <button className="ml-1 flex items-center gap-[3px] whitespace-nowrap">
            <Svg size={14}>{icons.read}</Svg>
            <span>阅读(<u>R</u>)</span>
          </button>
        </div>
        <EndCap />
      </Bar>
      <Bar className="w-[869px] pt-px">
        <div className="ml-px flex items-center">
          <Tool name="styles" />
          <Combo label="style" value="标题 1 + 段" className="ml-px w-[82px]" />
          <Combo label="font" value="方正美黑简体" className="w-[124px]" />
          <Combo label="size" value="二号" className="w-[52px]" />
          <Sep />
          <Tool name="bold" /><Tool name="italic" /><Tool name="underline" /><Caret />
          <Tool name="boxA" /><Tool name="shadeA" /><Tool name="scaleA" /><Caret /><Sep />
          <Tool name="justify" /><Tool name="center" on /><Tool name="right" /><Tool name="distribute" /><Tool name="spacing" /><Caret /><Sep />
          <Tool name="numbers" /><Tool name="bullets" /><Tool name="outdent" /><Tool name="indent" /><Sep />
          <Tool name="highlight" /><Caret /><Tool name="fontColor" /><Caret />
          <Tool name="pinyin" /><Tool name="circled" /><Tool name="grow" /><Tool name="shrink" />
        </div>
        <EndCap />
      </Bar>
      <div className="flex h-7 items-center pl-[3px]">
        <Grip />
        <nav className="ml-[9px] flex gap-[17px] whitespace-nowrap">
          {menus.map(([t, k]) => (
            <button key={k}>{t}(<u>{k}</u>)</button>
          ))}
        </nav>
        <button aria-label="formula" className="ml-3">
          <svg width="17" height="14" viewBox="0 0 17 14" fill="none" className="overflow-visible"><path d="M1 8l2-1 2 5L8 2h9" stroke="#e03a2a" strokeWidth="1.500" /><text x="8" y="11" fontSize="12" fontWeight="bold" fill="#2a62c8" fontFamily="Noto Sans, sans-serif">α</text></svg>
        </button>
        <div className="ml-auto flex h-[21px] w-[178px] bg-[#fafafa]">
          <input aria-label="help search" placeholder="键入需要帮助的问题" className="min-w-0 flex-1 bg-transparent pl-[3px] placeholder:text-[#7c7c7c]" />
          <div className="my-px mr-px flex w-[13px] items-center justify-center bg-[#bed8f7]"><Caret /></div>
        </div>
        <button aria-label="close document" className="ml-[5px] mr-[5px]">
          <svg width="8" height="8" viewBox="0 0 8 8"><path d="M0 0l8 8M8 0L0 8" stroke="#000" strokeWidth="1.500" /></svg>
        </button>
      </div>
    </div>

    <main className="flex min-h-0 flex-1 border-l-2 border-t-2 border-[#6f6f73]">
      <NavPane />
      <div className="w-px shrink-0 bg-[#555]" />
      <Editor />
    </main>

    <div className="shrink-0 bg-gradient-to-r from-[#9dbaf0] to-[#bed8f7] to-[50%] pt-0.5">
      <Bar className="w-[640px]">
        <div className="flex items-center whitespace-nowrap">
          <button className="ml-[3px] w-[42px] text-left">绘图(<u>D</u>)</button><Caret />
          <Tool name="pointer" /><Sep />
          <button className="ml-1 w-[66px] text-left">自选图形(<u>U</u>)</button><Caret />
          <Tool name="line" /><Tool name="arrow" /><Tool name="rect" /><Tool name="ellipse" /><Tool name="textbox" />
          <Tool name="vtextbox" /><Tool name="wordart" /><Tool name="diagram" /><Tool name="clip" /><Tool name="picture" /><Sep />
          <Tool name="fill" /><Caret /><Tool name="lineColor" /><Caret /><Tool name="fontColor" /><Caret />
          <Tool name="lineStyle" /><Tool name="dashStyle" /><Tool name="arrowStyle" /><Tool name="shadow" /><Tool name="cube" />
        </div>
        <EndCap />
      </Bar>
    </div>

    <div className="flex h-5 shrink-0 items-center gap-1.5 border-t border-[#8f97a5] bg-[#f0f0f0] pl-[5px] font-['Liberation_Sans','Noto_Sans_CJK_SC',sans-serif] text-[#9a9a9a]">
      <div className={`flex w-[196px] justify-end gap-[27px] pr-4 text-black ${cell}`}>
        <span className="mr-3.5">2 页</span><span>1 节</span><span>2/27</span>
      </div>
      <div className={`flex w-[224px] pl-[3px] pr-1 ${cell}`}>
        <span>位置</span><span className="ml-auto mr-8">行</span><span>列</span>
      </div>
      {statusCells.map((s, i) => (
        <div key={i} className={`text-center ${cell} ${s.w} ${s.on ? "text-black" : ""}`}>{s.t}</div>
      ))}
    </div>
    <Taskbar />
  </div>
);

export default App;
